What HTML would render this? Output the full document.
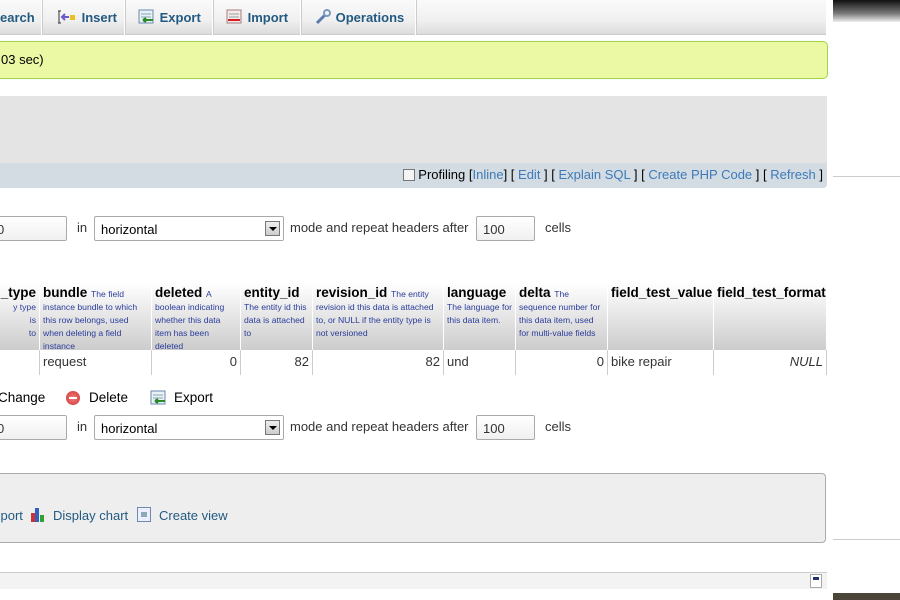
<!DOCTYPE html>
<html><head><meta charset="utf-8"><style>
*{margin:0;padding:0;box-sizing:border-box}
body{width:900px;height:600px;overflow:hidden;background:#fff;font-family:"Liberation Sans",Arial,sans-serif;font-size:13px;color:#333;position:relative}
.a{position:absolute}
.tabs{left:0;top:0;width:826px;height:35px;background:linear-gradient(#fafafa,#f0f0f0 60%,#dcdcdc);border-bottom:1px solid #ccc}
.tab{position:absolute;top:0;height:35px;line-height:35px;font-weight:bold;font-size:13px;color:#235a81;border-right:1px solid #fff;box-shadow:1px 0 0 #ccc}
.green{left:-10px;top:41px;width:838px;height:38px;background:#ebf8a4;border:1px solid #a2d246;border-radius:0 5px 5px 0;line-height:36px;padding-left:10px;font-size:13px;color:#000}
.gray{left:0;top:96px;width:827px;height:92px;background:#e4e4e4;border-radius:0 0 4px 0}
.strip{left:0;top:163px;width:827px;height:25px;background:#d3dce3;border-radius:0 0 4px 0;text-align:right;padding-right:4px;line-height:23px;font-size:13px;color:#000}
.strip a{color:#3e7ab8;text-decoration:none}
.inp{position:absolute;height:25px;border:1px solid #aaa;border-radius:2px;background:linear-gradient(#fff,#f0f0f0);font-size:13px;line-height:25px;padding-left:6px;color:#333}
.sel{position:absolute;height:25px;border:1px solid #aaa;border-radius:2px;background:#fff;font-size:13px;line-height:25px;padding-left:6px;color:#000}
.sel i{position:absolute;right:3px;top:4px;width:15px;height:15px;border:1px solid #777;background:linear-gradient(#eee,#ccc)}
.sel i:after{content:"";position:absolute;left:3px;top:5px;border:4px solid transparent;border-top:4px solid #000}
.lbl{position:absolute;font-size:13px;color:#333}
.th{position:absolute;top:283px;height:67px;background:linear-gradient(#fff,#ccc);border-right:1px solid #fff;padding:2px 3px;font-size:13.5px;font-weight:bold;color:#000;line-height:12px;overflow:hidden}
.th b{display:inline-block;line-height:15px}
.th span{font-weight:normal;font-size:8.6px;color:#2a3c9a;line-height:12px}
.td{position:absolute;top:350px;height:25px;border-right:1px solid #ccc;line-height:23px;padding:0 3px;font-size:13px;color:#333}
.r{text-align:right}
.box{left:-5px;top:473px;width:831px;height:70px;background:#eee;border:1px solid #aaa;border-radius:0 4px 4px 0}
.link{color:#235a81}
</style></head><body>
<div class="a tabs">
<div class="tab" style="left:0;width:42px;">earch</div>
<div class="tab" style="left:43px;width:82px;padding-left:13px"><svg width="22" height="16" style="vertical-align:-3px"><path d="M2 2h3M2 14h3M3 2v12" stroke="#333" fill="none"/><path d="M6 8h7M9 5l-3 3 3 3" stroke="#6a5acd" stroke-width="2" fill="none"/><rect x="14" y="6" width="5" height="5" fill="#e8c020"/></svg> Insert</div>
<div class="tab" style="left:126px;width:87px;padding-left:12px"><svg width="18" height="16" style="vertical-align:-3px"><rect x="1" y="1" width="14" height="13" fill="#e8f0f8" stroke="#6a8ab0"/><path d="M3 5h10M3 8h10" stroke="#8aa"/><path d="M5 11h10M5 11l3-2M5 11l3 2" stroke="#2a8a2a" stroke-width="2"/></svg> Export</div>
<div class="tab" style="left:214px;width:87px;padding-left:12px"><svg width="18" height="16" style="vertical-align:-3px"><rect x="1" y="1" width="14" height="13" fill="#f8e8e8" stroke="#a08080"/><path d="M3 5h10M3 8h10" stroke="#8aa"/><path d="M2 11h12" stroke="#d02020" stroke-width="2"/></svg> Import</div>
<div class="tab" style="left:302px;width:114px;padding-left:12px"><svg width="18" height="16" style="vertical-align:-3px"><path d="M3 14L11 6" stroke="#5a7ab0" stroke-width="3"/><circle cx="13" cy="4" r="3" fill="none" stroke="#7a9ac0" stroke-width="2"/></svg> Operations</div>
</div>
<div class="a" style="left:833px;top:0;width:67px;height:22px;background:linear-gradient(#111,#777 60%,#eee)"></div>
<div class="a green">03 sec)</div>
<div class="a gray"></div>
<div class="a strip"><span style="display:inline-block;width:12px;height:12px;border:1px solid #777;background:#f4f4f4;vertical-align:-2px"></span> Profiling [<a>Inline</a>] [ <a>Edit</a> ] [ <a>Explain SQL</a> ] [ <a>Create PHP Code</a> ] [ <a>Refresh</a> ]</div>
<div class="a" style="left:833px;top:176px;width:67px;height:1px;background:#ccc"></div>

<div class="inp" style="left:-10px;top:216px;width:77px">0</div>
<div class="lbl" style="left:77px;top:220px">in</div>
<div class="sel" style="left:94px;top:216px;width:190px">horizontal<i></i></div>
<div class="lbl" style="left:290px;top:220px">mode and repeat headers after</div>
<div class="inp" style="left:476px;top:216px;width:59px">100</div>
<div class="lbl" style="left:545px;top:220px">cells</div>

<div class="th" style="left:-10px;width:50px;text-align:right"><b>_type</b><br><span>y type<br>is<br>to</span></div>
<div class="th" style="left:40px;width:112px"><b>bundle</b> <span>The field instance bundle to which this row belongs, used when deleting a field instance</span></div>
<div class="th" style="left:152px;width:89px"><b>deleted</b> <span>A boolean indicating whether this data item has been deleted</span></div>
<div class="th" style="left:241px;width:72px"><b>entity_id</b><br><span>The entity id this data is attached to</span></div>
<div class="th" style="left:313px;width:131px"><b>revision_id</b> <span>The entity revision id this data is attached to, or NULL if the entity type is not versioned</span></div>
<div class="th" style="left:444px;width:72px"><b>language</b><br><span>The language for this data item.</span></div>
<div class="th" style="left:516px;width:92px"><b>delta</b> <span>The sequence number for this data item, used for multi-value fields</span></div>
<div class="th" style="left:608px;width:106px"><b>field_test_value</b></div>
<div class="th" style="left:714px;width:113px"><b>field_test_format</b></div>

<div class="td" style="left:-10px;width:50px"></div>
<div class="td" style="left:40px;width:112px">request</div>
<div class="td r" style="left:152px;width:89px">0</div>
<div class="td r" style="left:241px;width:72px">82</div>
<div class="td r" style="left:313px;width:131px">82</div>
<div class="td" style="left:444px;width:72px">und</div>
<div class="td r" style="left:516px;width:92px">0</div>
<div class="td" style="left:608px;width:106px">bike repair</div>
<div class="td r" style="left:714px;width:113px;font-style:italic">NULL</div>

<div class="lbl" style="left:-2px;top:390px;color:#000;font-size:13.5px">Change</div>
<div class="a" style="left:66px;top:391px;width:14px;height:14px;border-radius:50%;background:radial-gradient(#f08080,#d03030)"><div style="position:absolute;left:3px;top:6px;width:8px;height:2px;background:#fff"></div></div>
<div class="lbl" style="left:89px;top:390px;color:#000;font-size:13.5px">Delete</div>
<svg class="a" style="left:150px;top:390px" width="18" height="16"><rect x="1" y="1" width="14" height="13" fill="#e8f0f8" stroke="#6a8ab0"/><path d="M3 5h10M3 8h10" stroke="#8aa"/><path d="M5 11h10M5 11l3-2M5 11l3 2" stroke="#2a8a2a" stroke-width="2"/></svg>
<div class="lbl" style="left:174px;top:390px;color:#000;font-size:13.5px">Export</div>

<div class="inp" style="left:-10px;top:415px;width:77px">0</div>
<div class="lbl" style="left:77px;top:419px">in</div>
<div class="sel" style="left:94px;top:415px;width:190px">horizontal<i></i></div>
<div class="lbl" style="left:290px;top:419px">mode and repeat headers after</div>
<div class="inp" style="left:476px;top:415px;width:59px">100</div>
<div class="lbl" style="left:545px;top:419px">cells</div>

<div class="a box"></div>
<div class="lbl link" style="left:-6px;top:508px">xport</div>
<svg class="a" style="left:30px;top:507px" width="16" height="15"><rect x="1" y="6" width="4" height="9" fill="#d03030"/><rect x="5" y="1" width="4" height="14" fill="#3060c0"/><rect x="10" y="8" width="4" height="7" fill="#30a030"/></svg>
<div class="lbl link" style="left:53px;top:508px">Display chart</div>
<svg class="a" style="left:137px;top:507px" width="14" height="15"><rect x="0.5" y="0.5" width="13" height="14" fill="#eef" stroke="#6a8ab0"/><rect x="4" y="5" width="6" height="5" fill="#8ab"/></svg>
<div class="lbl link" style="left:159px;top:508px">Create view</div>
<div class="a" style="left:833px;top:539px;width:67px;height:1px;background:#ccc"></div>

<div class="a" style="left:0;top:572px;width:827px;height:17px;background:#f3f3f3;border-top:1px solid #ccc"></div>
<div class="a" style="left:810px;top:574px;width:12px;height:14px;border:1px solid #aaa;background:#fff"><div style="width:6px;height:3px;background:#236;margin:2px"></div></div>
<div class="a" style="left:833px;top:593px;width:67px;height:7px;background:#4a4538"></div>
</body></html>
